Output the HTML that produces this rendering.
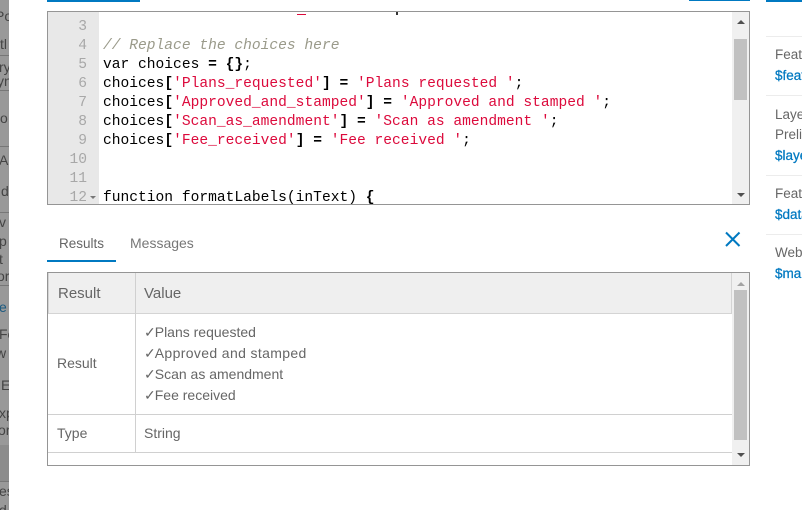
<!DOCTYPE html>
<html><head><meta charset="utf-8"><style>
html,body{margin:0;padding:0;background:#fff}
body{position:relative;width:802px;height:510px;overflow:hidden;font-family:"Liberation Sans",sans-serif;color:#4c4c4c}
.a{position:absolute;white-space:pre}
.box{position:absolute;background:#fff;border:1px solid #959595;box-sizing:border-box;overflow:hidden}
.code{position:absolute;left:55px;font:14.6px/19px "Liberation Mono",monospace;color:#000;white-space:pre;height:19px}
.num{position:absolute;left:0;width:39px;text-align:right;font:14.6px/19px "Liberation Mono",monospace;color:#a8a8a8;height:19px}
.s{color:#dc0a3c}b{font-weight:700}
.t{position:absolute;font-size:14px;line-height:21px;white-space:pre;color:#666}
.ck{margin-right:-1px}
.r{position:absolute;left:775px;font-size:13.5px;line-height:20px;white-space:pre;color:#666}
.rb{color:#0079c1;-webkit-text-stroke:.25px #0079c1}
.l{position:absolute;background:#ececec}
.left{position:absolute;left:0;top:0;width:9px;height:510px;background:#999;overflow:hidden}
.left span{position:absolute;font-size:14px;line-height:18px;white-space:pre;color:#444}
.left i{position:absolute;left:0;width:9px;height:1px;background:#777}
.tri{position:absolute;width:0;height:0;border-left:4px solid transparent;border-right:4px solid transparent}
</style></head><body>
<div class="left">
<span style="left:-5px;top:7px">Po</span>
<span style="left:0;top:35px">tl</span>
<i style="top:55px"></i>
<span style="left:-1px;top:58px">ry</span>
<span style="left:-3px;top:72px">yn</span>
<i style="top:90px"></i>
<span style="left:0;top:109px">o</span>
<i style="top:146px"></i>
<span style="left:-1px;top:151px">A</span>
<span style="left:1px;top:182px">d</span>
<i style="top:212px"></i>
<span style="left:-1px;top:213px">v</span>
<span style="left:-1px;top:232px">p</span>
<span style="left:-1px;top:250px">t</span>
<span style="left:-3px;top:267px">or</span>
<i style="top:285px"></i>
<span style="left:-1px;top:298px;color:#1b5a80">e</span>
<span style="left:-1px;top:325px">Fe</span>
<span style="left:-4px;top:344px">w</span>
<span style="left:1px;top:376px">E</span>
<span style="left:-1px;top:404px">xp</span>
<span style="left:-2px;top:421px">or</span>
<div style="position:absolute;left:0;top:445px;width:9px;height:36px;background:#8c8c8c"></div>
<i style="top:481px"></i>
<span style="left:-1px;top:482px">es</span>
<span style="left:-1px;top:501px">d</span>
</div>

<div class="a" style="left:47px;top:0;width:93px;height:2px;background:#0079c1"></div>
<div class="a" style="left:689px;top:0;width:61px;height:1px;background:#0079c1"></div>
<div class="a" style="left:766px;top:0;width:36px;height:2px;background:#0079c1"></div>

<div class="box" style="left:47px;top:11px;width:703px;height:194px">
<div style="position:absolute;left:0;top:0;width:51px;height:192px;background:#e8e8e8"></div>
<div style="position:absolute;left:249px;top:2px;width:9px;height:1px;background:#dc0a3c"></div>
<div style="position:absolute;left:348px;top:0;width:2px;height:3px;background:#333"></div>
<div class="num" style="top:6px">3</div>
<div class="num" style="top:25px">4</div><div class="code" style="top:25px;color:#9a9a8a;font-style:italic">// Replace the choices here</div>
<div class="num" style="top:44px">5</div><div class="code" style="top:44px">var choices <b>=</b> <b>{}</b>;</div>
<div class="num" style="top:63px">6</div><div class="code" style="top:63px">choices<b>[</b><span class="s">'Plans_requested'</span><b>]</b> <b>=</b> <span class="s">'Plans requested '</span>;</div>
<div class="num" style="top:82px">7</div><div class="code" style="top:82px">choices<b>[</b><span class="s">'Approved_and_stamped'</span><b>]</b> <b>=</b> <span class="s">'Approved and stamped '</span>;</div>
<div class="num" style="top:101px">8</div><div class="code" style="top:101px">choices<b>[</b><span class="s">'Scan_as_amendment'</span><b>]</b> <b>=</b> <span class="s">'Scan as amendment '</span>;</div>
<div class="num" style="top:120px">9</div><div class="code" style="top:120px">choices<b>[</b><span class="s">'Fee_received'</span><b>]</b> <b>=</b> <span class="s">'Fee received '</span>;</div>
<div class="num" style="top:139px">10</div>
<div class="num" style="top:158px">11</div>
<div class="num" style="top:177px">12</div>
<div class="tri" style="left:42px;top:184px;border-left-width:3px;border-right-width:3px;border-top:3px solid #777"></div>
<div class="code" style="top:177px">function formatLabels(inText) <b>{</b></div>
<div style="position:absolute;left:684px;top:0;width:17px;height:192px;background:#f0f0f0"></div>
<div style="position:absolute;left:686px;top:27px;width:13px;height:61px;background:#c1c1c1"></div>
<div class="tri" style="left:689px;top:8px;border-bottom:4px solid #505050"></div>
<div class="tri" style="left:689px;top:181px;border-top:4px solid #505050"></div>
</div>

<div class="t" style="left:59px;top:233px;font-size:13.5px">Results</div>
<div class="t" style="left:130px;top:233px;color:#777">Messages</div>
<div class="a" style="left:47px;top:260px;width:69px;height:2px;background:#0079c1"></div>
<svg class="a" style="left:724px;top:231px" width="18" height="16" viewBox="0 0 18 16"><path d="M2 1.5L15.5 15M15.5 1.5L2 15" stroke="#0079c1" stroke-width="2" fill="none"/></svg>

<div class="box" style="left:47px;top:272px;width:703px;height:194px">
<div style="position:absolute;left:0;top:0;width:684px;height:41px;background:#efefef;border:1px solid #d4d4d4;border-top:0;box-sizing:border-box"></div>
<div style="position:absolute;left:87px;top:0;width:1px;height:180px;background:#d0d0d0"></div>
<div style="position:absolute;left:0;top:141px;width:684px;height:1px;background:#d0d0d0"></div>
<div style="position:absolute;left:0;top:179px;width:684px;height:1px;background:#d0d0d0"></div>
<div class="t" style="left:10px;top:10px;font-size:15px">Result</div>
<div class="t" style="left:96px;top:10px;font-size:15px">Value</div>
<div class="t" style="left:96px;top:49px"><span class="ck">✓</span>Plans requested</div>
<div class="t" style="left:96px;top:70px"><span class="ck">✓</span><span style="letter-spacing:.36px">Approved and stamped</span></div>
<div class="t" style="left:96px;top:91px"><span class="ck">✓</span>Scan as amendment</div>
<div class="t" style="left:96px;top:112px"><span class="ck">✓</span>Fee received</div>
<div class="t" style="left:9px;top:80px">Result</div>
<div class="t" style="left:9px;top:150px">Type</div>
<div class="t" style="left:96px;top:150px">String</div>
<div style="position:absolute;left:684px;top:0;width:17px;height:192px;background:#f0f0f0"></div>
<div style="position:absolute;left:686px;top:17px;width:13px;height:150px;background:#c1c1c1"></div>
<div class="tri" style="left:689px;top:9px;border-bottom:4px solid #a3a3a3"></div>
<div class="tri" style="left:689px;top:180px;border-top:4px solid #505050"></div>
</div>

<div class="l" style="left:766px;top:36px;width:36px;height:1px"></div>
<div class="l" style="left:766px;top:95px;width:36px;height:1px"></div>
<div class="l" style="left:766px;top:175px;width:36px;height:1px"></div>
<div class="l" style="left:766px;top:234px;width:36px;height:1px"></div>
<div class="r" style="top:45px">Feature</div>
<div class="r rb" style="top:66px">$feature</div>
<div class="r" style="top:105px">Layer</div>
<div class="r" style="top:125px">Prelim</div>
<div class="r rb" style="top:146px">$layer</div>
<div class="r" style="top:184px">Feature</div>
<div class="r rb" style="top:205px">$data</div>
<div class="r" style="top:243px">Web</div>
<div class="r rb" style="top:264px">$map</div>
</body></html>
